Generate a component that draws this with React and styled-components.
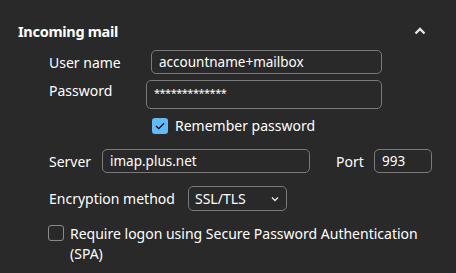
import styled, { createGlobalStyle } from "styled-components";

const Global = createGlobalStyle`
  html, body {
    margin: 0;
    background: #292929;
  }
  body {
    font-family: "Noto Sans", "Open Sans", sans-serif;
    color: #ffffff;
  }
`;

const Panel = styled.div`
  width: 456px;
  height: 273px;
  box-sizing: border-box;
  padding-top: 20px;
  background: #292929;
  overflow: hidden;
`;

const Header = styled.div`
  display: flex;
  align-items: center;
  justify-content: space-between;
  padding: 0 30px 0 18px;
  height: 22px;
`;

const Title = styled.h2`
  margin: 0;
  font-size: 14.5px;
  font-weight: 700;
  letter-spacing: -0.3px;
  color: #ffffff;
`;

const Body = styled.div`
  display: flex;
  flex-direction: column;
  padding-left: 49px;
`;

const Row = styled.div`
  display: flex;
  align-items: ${({ $top }) => ($top ? "flex-start" : "center")};
  margin-top: ${({ $mt }) => $mt || 0}px;
  margin-left: ${({ $ml }) => $ml || 0}px;
`;

const Label = styled.label`
  font-size: 14px;
  color: #ffffff;
  width: ${({ $w }) => ($w ? `${$w}px` : "auto")};
  margin-left: ${({ $ml }) => $ml || 0}px;
  padding-top: ${({ $pt }) => $pt || 0}px;
  flex-shrink: 0;
  white-space: nowrap;
`;

const Input = styled.input`
  box-sizing: border-box;
  width: ${({ $w }) => $w}px;
  height: ${({ $h }) => $h || 24}px;
  background: #292929;
  border: 1px solid #7a7a7a;
  border-radius: 5px;
  color: #ffffff;
  font-family: inherit;
  font-size: 13.5px;
  padding: 0 7px;
  outline: none;

  &.secret {
    font-size: 11px;
    letter-spacing: -0.5px;
    padding-bottom: 4px;
  }
`;

const Check = styled.span`
  box-sizing: border-box;
  display: inline-flex;
  align-items: center;
  justify-content: center;
  width: 16px;
  height: 16px;
  border-radius: 3px;
  background: ${({ $on }) => ($on ? "#64b9f8" : "transparent")};
  border: ${({ $on }) => ($on ? "none" : "1px solid #8a8a8a")};
  flex-shrink: 0;
`;

const CheckText = styled.span`
  font-size: 14px;
  line-height: 20px;
  margin-left: ${({ $ml }) => $ml || 7}px;
`;

const Select = styled.div`
  box-sizing: border-box;
  width: 99px;
  height: 25px;
  display: flex;
  align-items: center;
  justify-content: space-between;
  padding: 0 6px 0 6px;
  border: 1px solid #7a7a7a;
  border-radius: 5px;
  font-size: 14px;
`;

function Chevron({ up }) {
  return up ? (
    <svg width="12" height="8" viewBox="0 0 12 8">
      <path d="M1.5 6.5 L6 2 L10.5 6.5" fill="none" stroke="#e6e6e6" strokeWidth="2.3" />
    </svg>
  ) : (
    <svg width="10" height="6" viewBox="0 0 10 6">
      <path d="M2 1.5 L5 4.5 L8 1.5" fill="none" stroke="#e6e6e6" strokeWidth="1.3" />
    </svg>
  );
}

function Tick() {
  return (
    <svg width="10" height="8" viewBox="0 0 10 8">
      <path d="M1 4 L3.8 6.6 L9 1.2" fill="none" stroke="#111" strokeWidth="1.3" />
    </svg>
  );
}

export default function App() {
  return (
    <Panel>
      <Global />
      <Header>
        <Title>Incoming mail</Title>
        <Chevron up />
      </Header>
      <Body>
        <Row $mt={8}>
          <Label $w={102}>User name</Label>
          <Input $w={231} defaultValue="accountname+mailbox" />
        </Row>
        <Row $mt={6} $top>
          <Label $w={97} $pt={1}>Password</Label>
          <Input className="secret" $w={236} $h={29} defaultValue="*************" />
        </Row>
        <Row $mt={7} $ml={103}>
          <Check $on>
            <Tick />
          </Check>
          <CheckText>Remember password</CheckText>
        </Row>
        <Row $mt={13}>
          <Label $w={53}>Server</Label>
          <Input $w={208} defaultValue="imap.plus.net" />
          <Label $w={38} $ml={26}>Port</Label>
          <Input $w={58} defaultValue="993" />
        </Row>
        <Row $mt={13}>
          <Label $w={139}>Encryption method</Label>
          <Select>
            <span>SSL/TLS</span>
            <Chevron />
          </Select>
        </Row>
        <Row $mt={13} $top $ml={-1}>
          <Check style={{ marginTop: 1 }} />
          <CheckText $ml={6} style={{ width: 360 }}>
            Require logon using Secure Password Authentication (SPA)
          </CheckText>
        </Row>
      </Body>
    </Panel>
  );
}
